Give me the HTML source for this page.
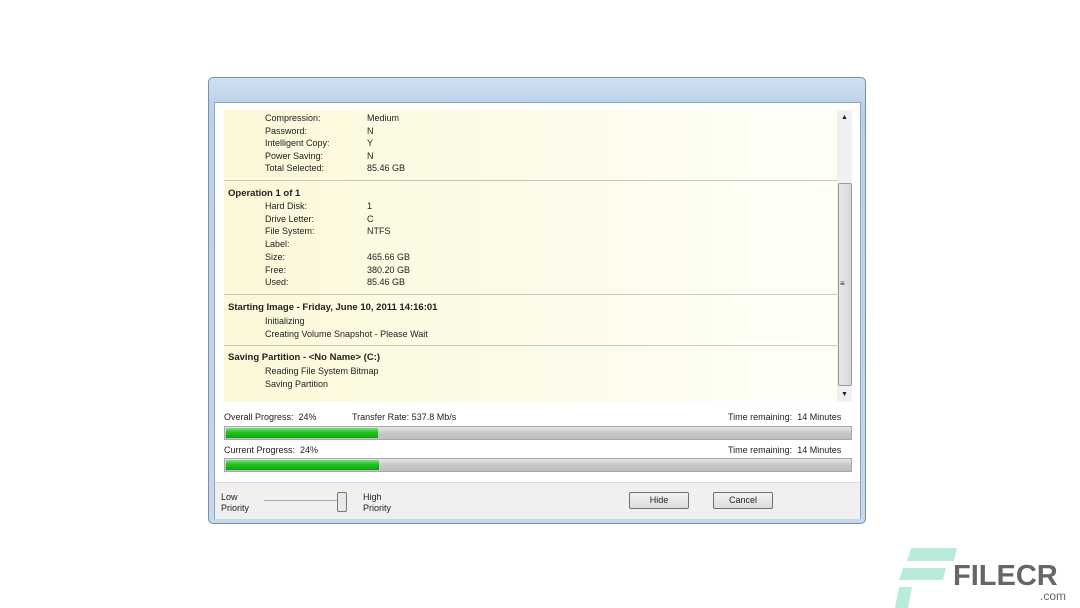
<!DOCTYPE html><html><head><style>
body{margin:0;width:1080px;height:608px;background:#fff;position:relative;overflow:hidden;font-family:"Liberation Sans",sans-serif;font-size:9px;color:#222}
.a{position:absolute}
.win{left:208px;top:77px;width:658px;height:447px;background:linear-gradient(#cfe0f2,#b9d1ea 30px,#c4d8ee);border:1px solid #7f8fa3;border-radius:5px;box-sizing:border-box}
.cl{left:214px;top:102px;width:647px;height:417px;background:#fff;border:1px solid #8fa3bb;box-sizing:border-box}
.yel{left:224px;top:110px;width:613px;height:292px;background:linear-gradient(90deg,#fbf8d8,#fdfcec 60%,#fffff8)}
.t{position:absolute;white-space:nowrap;line-height:12px}
.b{font-weight:bold;font-size:9.5px}
.sep{position:absolute;left:224px;width:613px;height:1px;background:#c8c8c0}
.bar{position:absolute;left:224px;width:628px;height:14px;background:linear-gradient(#e6e6e6,#c9c9c9 50%,#bdbdbd);border:1px solid #a8a8a8;box-sizing:border-box}
.bar i{position:absolute;left:1px;top:1px;bottom:1px;width:152px;background:linear-gradient(#7ee07e,#1fc11f 45%,#0aa60a);}
.btn{position:absolute;top:492px;width:60px;height:17px;border:1px solid #707070;border-radius:2px;background:linear-gradient(#f2f2f2,#dcdcdc);box-sizing:border-box;text-align:center;line-height:15px}
</style></head><body>
<div class="a win"></div>
<div class="a cl"></div>
<div class="a yel"></div>
<div class="a" style="left:837px;top:110px;width:15px;height:292px;background:#f0f0f0"></div>
<div class="a" style="left:838px;top:183px;width:12px;height:201px;background:linear-gradient(90deg,#e8e8e8,#d8d8d8);border:1px solid #9a9a9a;border-radius:2px"></div>
<div class="t" style="left:840px;top:278px;font-size:8px">≡</div>
<div class="t" style="left:841px;top:112px;font-size:7px">▲</div>
<div class="t" style="left:841px;top:389px;font-size:7px">▼</div>

<div class="t" style="left:265px;top:112px;line-height:12.6px">Compression:<br>Password:<br>Intelligent Copy:<br>Power Saving:<br>Total Selected:</div>
<div class="t" style="left:367px;top:112px;line-height:12.6px">Medium<br>N<br>Y<br>N<br>85.46 GB</div>
<div class="sep" style="top:180px"></div>
<div class="t b" style="left:228px;top:188px">Operation 1 of 1</div>
<div class="t" style="left:265px;top:200px;line-height:12.7px">Hard Disk:<br>Drive Letter:<br>File System:<br>Label:<br>Size:<br>Free:<br>Used:</div>
<div class="t" style="left:367px;top:200px;line-height:12.7px">1<br>C<br>NTFS<br><br>465.66 GB<br>380.20 GB<br>85.46 GB</div>
<div class="sep" style="top:294px"></div>
<div class="t b" style="left:228px;top:302px">Starting Image - Friday, June 10, 2011 14:16:01</div>
<div class="t" style="left:265px;top:315px;line-height:12.6px">Initializing<br>Creating Volume Snapshot - Please Wait</div>
<div class="sep" style="top:345px"></div>
<div class="t b" style="left:228px;top:352px">Saving Partition - &lt;No Name&gt; (C:)</div>
<div class="t" style="left:265px;top:365px;line-height:12.6px">Reading File System Bitmap<br>Saving Partition</div>

<div class="t" style="left:224px;top:411px">Overall Progress:&nbsp; 24%</div>
<div class="t" style="left:352px;top:411px">Transfer Rate: 537.8 Mb/s</div>
<div class="t" style="left:728px;top:411px">Time remaining:&nbsp; 14 Minutes</div>
<div class="bar" style="top:426px"><i></i></div>
<div class="t" style="left:224px;top:444px">Current Progress:&nbsp; 24%</div>
<div class="t" style="left:728px;top:444px">Time remaining:&nbsp; 14 Minutes</div>
<div class="bar" style="top:458px"><i style="width:153px"></i></div>
<div class="a" style="left:215px;top:482px;width:645px;height:36px;background:#f0f0f0;border-top:1px solid #d8d8d8"></div>
<div class="t" style="left:221px;top:492px;line-height:11px">Low<br>Priority</div>
<div class="t" style="left:363px;top:492px;line-height:11px">High<br>Priority</div>
<div class="a" style="left:264px;top:500px;width:80px;height:1px;background:#aaa"></div>
<div class="a" style="left:337px;top:492px;width:8px;height:18px;border:1px solid #777;border-radius:2px;background:#e8e8e8"></div>
<div class="btn" style="left:629px">Hide</div>
<div class="btn" style="left:713px">Cancel</div>

<svg class="a" style="left:895px;top:548px" width="65" height="60"><polygon points="16,0 62,0 59,13 12,13" fill="#b8ecd8"/><polygon points="8,20 51,20 48,32 4,32" fill="#b8ecd8"/><polygon points="4,39 17,39 13,60 0,60" fill="#b8ecd8"/></svg>
<div class="t" style="left:953px;top:560px;font-size:29px;line-height:32px;font-weight:bold;color:#666">FILECR</div>
<div class="t" style="left:1040px;top:590px;font-size:12px;color:#666">.com</div>
</body></html>
